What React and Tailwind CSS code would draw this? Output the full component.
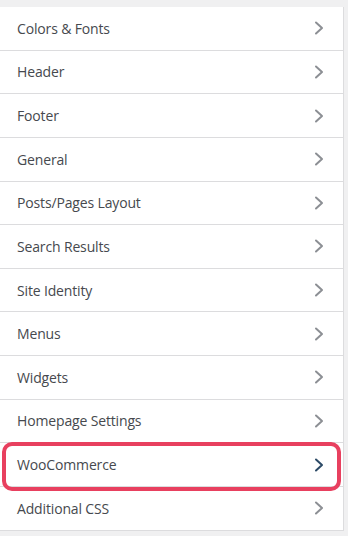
import React from "react";

const items = [
  "Colors & Fonts",
  "Header",
  "Footer",
  "General",
  "Posts/Pages Layout",
  "Search Results",
  "Site Identity",
  "Menus",
  "Widgets",
  "Homepage Settings",
  "WooCommerce",
  "Additional CSS",
];

function Chevron({ active }) {
  return (
    <svg width="10" height="14" viewBox="0 0 10 14" fill="none" className="shrink-0">
      <path
        d="M2 1.5 L8 7 L2 12.5"
        stroke={active ? "#2c4a66" : "#8c8f94"}
        strokeWidth="2"
        strokeLinecap="round"
        strokeLinejoin="round"
      />
    </svg>
  );
}

export default function App() {
  return (
    <div
      className="w-[348px] h-[536px] bg-[#f0f0f1] flex overflow-hidden"
      style={{ fontFamily: '"Open Sans", "Noto Sans", sans-serif' }}
    >
      <div className="w-[344px] pt-[7px] flex flex-col">
        <ul className="bg-white border-r border-[#dcdcde] flex flex-col">
          {items.map((label) => {
            const active = label === "WooCommerce";
            return (
              <li
                key={label}
                className="relative h-[43.64px] border-b border-[#dcdcde] flex items-center justify-between pl-[17px] pr-[19px]"
              >
                <span className="text-[14px] text-[#46494e] tracking-[-0.15px]">{label}</span>
                <Chevron active={active} />
                {active && (
                  <div className="absolute left-[2px] right-[2px] top-[-1px] bottom-[-5px] border-[4px] border-[#e8405f] rounded-[10px] pointer-events-none" />
                )}
              </li>
            );
          })}
        </ul>
      </div>
      <div className="flex-1 bg-[#f0f0f1]" />
    </div>
  );
}
